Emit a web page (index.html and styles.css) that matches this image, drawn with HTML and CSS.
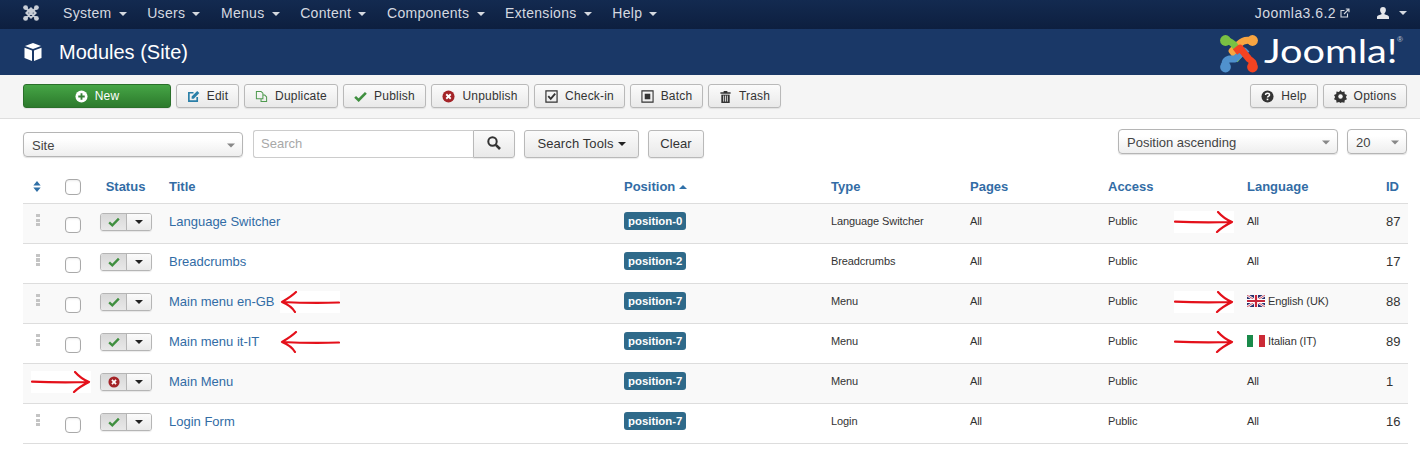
FILE: index.html
```html
<!DOCTYPE html>
<html lang="en">
<head>
<meta charset="utf-8">
<title>Modules (Site)</title>
<link rel="stylesheet" href="styles.css">
</head>
<body>
<svg class="defs" width="0" height="0">
  <defs>
    <symbol id="caret" viewBox="0 0 8 4"><path d="M0 0h8L4 4z" fill="currentColor"/></symbol>
    <symbol id="check" viewBox="0 0 14 12"><path d="M1.200 6.400 5 10 12.800 2" fill="none" stroke="currentColor" stroke-width="2.800"/></symbol>
    <symbol id="xcircle" viewBox="0 0 14 14"><circle cx="7" cy="7" r="6.500" fill="currentColor"/><path d="M4.600 4.600l4.800 4.800M9.400 4.600 4.600 9.400" stroke="#fff" stroke-width="2"/></symbol>
    <symbol id="mark" viewBox="0 0 20 20"><g fill="none" stroke="currentColor" stroke-width="2.800"><path d="M4 4l12 12M16 4 4 16M10 4.500 4.500 10 10 15.500 15.500 10z"/></g><g fill="currentColor"><circle cx="3.200" cy="3.200" r="3"/><circle cx="16.800" cy="3.200" r="3"/><circle cx="3.200" cy="16.800" r="3"/><circle cx="16.800" cy="16.800" r="3"/></g></symbol>
    <symbol id="arrow-right" viewBox="0 0 60 22"><path d="M1 10.600c18 .8 38 .9 57 .4M44 1c4 4.500 9 8 14 10-5 2.500-11 6-15 10" fill="none" stroke="#e4101a" stroke-width="2.200" stroke-linecap="round" stroke-linejoin="round"/></symbol>
    <symbol id="arrow-left" viewBox="0 0 60 22"><path d="M59 11.500c-18 .6-38 .4-57-.5M16 1C12 5 7 8 2 11c5 2 10 5 13 10" fill="none" stroke="#e4101a" stroke-width="2.200" stroke-linecap="round" stroke-linejoin="round"/></symbol>
  </defs>
</svg>

<nav class="topbar">
  <svg class="nav-logo"><use href="#mark"/></svg>
  <ul class="nav-menu">
    <li>System <svg class="caret"><use href="#caret"/></svg></li>
    <li>Users <svg class="caret"><use href="#caret"/></svg></li>
    <li>Menus <svg class="caret"><use href="#caret"/></svg></li>
    <li>Content <svg class="caret"><use href="#caret"/></svg></li>
    <li>Components <svg class="caret"><use href="#caret"/></svg></li>
    <li>Extensions <svg class="caret"><use href="#caret"/></svg></li>
    <li>Help <svg class="caret"><use href="#caret"/></svg></li>
  </ul>
  <div class="nav-right">
    <span class="site-link">Joomla3.6.2
      <svg class="ext" viewBox="0 0 10 10"><path d="M7.500 5.500V9H1V2.500h3.500M4 6l5-5M5.800 1H9v3.200" fill="none" stroke="currentColor" stroke-width="1.100"/></svg>
    </span>
    <span class="user">
      <svg class="user-ico" viewBox="0 0 12 12"><path d="M6 0c1.900 0 2.900 1.300 2.900 3.100 0 1.400-.7 2.600-1.400 3.200v.9c1.500.5 4.500 1 4.500 2.800V12H0v-2c0-1.800 3-2.300 4.500-2.800v-.9c-.7-.6-1.400-1.800-1.400-3.200C3.100 1.300 4.100 0 6 0z" fill="currentColor"/></svg>
      <svg class="caret"><use href="#caret"/></svg>
    </span>
  </div>
</nav>

<header class="subhead">
  <svg class="cube" viewBox="0 0 18 18"><path d="M9 0l8 3-8 3-8-3z" fill="#fff"/><path d="M.5 4.800l7.500 2.800V18L.500 15z" fill="#fff"/><path d="M17.500 4.800 10 7.600V18l7.500-3z" fill="#fff"/></svg>
  <h1 class="page-title">Modules (Site)</h1>
  <div class="brand">
    <svg class="brand-mark" viewBox="0 0 38 38">
      <g fill="none" stroke-width="6.800" stroke-linejoin="round">
        <path d="M32 6 C26 4 22 6 19 9 L12 16 L16 21" stroke="#f9a541"/>
        <path d="M5 5 C10 6 13 8 15 11 L21 18 L15 25" stroke="#7ac143"/>
        <path d="M5 32 C4 27 6 25 9 24 L15 24 L24 16 L27 19" stroke="#5091cd"/>
        <path d="M33 32 C35 28 32 26 29 24 L20 13 L15 17" stroke="#f44321"/>
      </g>
      <circle cx="5.500" cy="5.500" r="5.400" fill="#7ac143"/>
      <circle cx="32.500" cy="5.500" r="5.400" fill="#f9a541"/>
      <circle cx="32.500" cy="32" r="5.400" fill="#f44321"/>
      <circle cx="5.500" cy="32" r="5.400" fill="#5091cd"/>
    </svg>
    <span class="brand-text">Joomla!</span><span class="reg">®</span>
  </div>
</header>

<section class="toolbar">
  <button class="btn btn-new"><svg class="ico" viewBox="0 0 14 14"><circle cx="7" cy="7" r="6.500" fill="#fff"/><path d="M7 3.500v7M3.500 7h7" stroke="#378137" stroke-width="2"/></svg>New</button>
  <button class="btn w-edit"><svg class="ico blue" viewBox="0 0 14 14"><path d="M11 7.500V12H2V3h5" fill="none" stroke="currentColor" stroke-width="1.800"/><path d="M5 9.500V7l6-6 2.300 2.300-6 6z" fill="currentColor"/></svg>Edit</button>
  <button class="btn w-dup"><svg class="ico green-line" viewBox="0 0 14 14"><path d="M1.500 1.500h5l2 2v6h-7zM8.500 5.500h2l2 2v5h-6v-3" fill="none" stroke="currentColor" stroke-width="1.100"/></svg>Duplicate</button>
  <button class="btn w-pub"><svg class="ico green" viewBox="0 0 14 12"><use href="#check"/></svg>Publish</button>
  <button class="btn w-unpub"><svg class="ico red"><use href="#xcircle"/></svg>Unpublish</button>
  <button class="btn w-checkin"><svg class="ico" viewBox="0 0 14 14"><path d="M1 1h12v12H1z" fill="none" stroke="#333" stroke-width="1.300"/><path d="M3.500 6.500 6.200 9.500 11 3.800" fill="none" stroke="#333" stroke-width="2"/></svg>Check-in</button>
  <button class="btn w-batch"><svg class="ico" viewBox="0 0 14 14"><path d="M1 1h12v12H1z" fill="none" stroke="#333" stroke-width="1.200"/><path d="M4 4h6v6H4z" fill="#333"/></svg>Batch</button>
  <button class="btn w-trash"><svg class="ico" viewBox="0 0 14 14"><path d="M1.500 2.500h11v1.500h-11zM5 2.500V1h4v1.500" fill="#333"/><path d="M2.500 5h9v9h-9z" fill="#333"/><path d="M5 6v6.500M7 6v6.500M9 6v6.500" stroke="#f5f5f5" stroke-width=".9"/></svg>Trash</button>
  <div class="toolbar-right">
    <button class="btn w-help"><svg class="ico" viewBox="0 0 14 14"><circle cx="7" cy="7" r="6.500" fill="#333"/><path d="M4.800 5.400C5 3 9.200 3 9.200 5.300 9.200 6.700 7 6.600 7 8.200" fill="none" stroke="#fff" stroke-width="1.600"/><path d="M6.100 9.300h1.800v1.700H6.100z" fill="#fff"/></svg>Help</button>
    <button class="btn w-options"><svg class="ico" viewBox="0 0 14 14"><path d="M7 0l1.600 2.200 2.700-.6.300 2.700 2.400 1.200L12.800 7.500 14 10l-2.400 1-.4 2.600-2.700-.5L7 14l-1.600-1-2.600.6-.4-2.600L0 10l1.200-2.500L0 5.500l2.400-1.200.3-2.700 2.700.6z" fill="#333"/><circle cx="7" cy="7" r="2.400" fill="#f5f5f5"/></svg>Options</button>
  </div>
</section>

<section class="filters">
  <div class="select s-site">Site<svg class="sel-caret"><use href="#caret"/></svg></div>
  <div class="search-group">
    <div class="search-input">Search</div>
    <button class="btn search-btn"><svg class="search-ico" viewBox="0 0 14 14"><circle cx="5.500" cy="5.500" r="4.200" fill="none" stroke="#333" stroke-width="2"/><path d="M8.800 8.800 13 13" stroke="#333" stroke-width="2.600"/></svg></button>
  </div>
  <button class="btn tall w-tools">Search Tools <svg class="caret dark"><use href="#caret"/></svg></button>
  <button class="btn tall w-clear">Clear</button>
  <div class="filters-right">
    <div class="select s-order">Position ascending<svg class="sel-caret"><use href="#caret"/></svg></div>
    <div class="select s-limit">20<svg class="sel-caret"><use href="#caret"/></svg></div>
  </div>
</section>

<main class="table-wrap">
  <table class="modules">
    <colgroup>
      <col class="c-order"><col class="c-check"><col class="c-status"><col class="c-title"><col class="c-pos"><col class="c-type"><col class="c-pages"><col class="c-access"><col class="c-lang"><col class="c-id">
    </colgroup>
    <thead>
      <tr>
        <th class="center th-sort"><svg class="sort" viewBox="0 0 8 12"><path d="M4 0l4 5H0zM4 12 0 7h8z" fill="currentColor"/></svg></th>
        <th><span class="cb"></span></th>
        <th class="center th-status">Status</th>
        <th>Title</th>
        <th>Position <svg class="caret up"><use href="#caret"/></svg></th>
        <th>Type</th>
        <th>Pages</th>
        <th>Access</th>
        <th>Language</th>
        <th>ID</th>
      </tr>
    </thead>
    <tbody>
      <tr>
        <td><span class="drag"></span></td><td><span class="cb low"></span></td>
        <td><span class="status"><span class="st-l"><svg class="st-check"><use href="#check"/></svg></span><span class="st-r"><svg class="caret dark"><use href="#caret"/></svg></span></span></td>
        <td class="title">Language Switcher</td><td><span class="badge">position-0</span></td><td class="small">Language Switcher</td><td class="small">All</td><td class="small">Public</td><td class="small">All</td><td class="id">87</td>
      </tr>
      <tr>
        <td><span class="drag"></span></td><td><span class="cb low"></span></td>
        <td><span class="status"><span class="st-l"><svg class="st-check"><use href="#check"/></svg></span><span class="st-r"><svg class="caret dark"><use href="#caret"/></svg></span></span></td>
        <td class="title">Breadcrumbs</td><td><span class="badge">position-2</span></td><td class="small">Breadcrumbs</td><td class="small">All</td><td class="small">Public</td><td class="small">All</td><td class="id">17</td>
      </tr>
      <tr>
        <td><span class="drag"></span></td><td><span class="cb low"></span></td>
        <td><span class="status"><span class="st-l"><svg class="st-check"><use href="#check"/></svg></span><span class="st-r"><svg class="caret dark"><use href="#caret"/></svg></span></span></td>
        <td class="title">Main menu en-GB</td><td><span class="badge">position-7</span></td><td class="small">Menu</td><td class="small">All</td><td class="small">Public</td>
        <td class="small"><svg class="flag" viewBox="0 0 18 12"><path fill="#28306e" d="M0 0h18v12H0z"/><path d="M0 0l18 12M18 0 0 12" stroke="#fff" stroke-width="2.400"/><path d="M0 0l18 12M18 0 0 12" stroke="#c8283c" stroke-width=".8"/><path d="M9 0v12M0 6h18" stroke="#fff" stroke-width="4"/><path d="M9 0v12M0 6h18" stroke="#c8283c" stroke-width="2.200"/></svg>English (UK)</td><td class="id">88</td>
      </tr>
      <tr>
        <td><span class="drag"></span></td><td><span class="cb low"></span></td>
        <td><span class="status"><span class="st-l"><svg class="st-check"><use href="#check"/></svg></span><span class="st-r"><svg class="caret dark"><use href="#caret"/></svg></span></span></td>
        <td class="title">Main menu it-IT</td><td><span class="badge">position-7</span></td><td class="small">Menu</td><td class="small">All</td><td class="small">Public</td>
        <td class="small"><svg class="flag" viewBox="0 0 18 12"><path fill="#1a8a4a" d="M0 0h6v12H0z"/><path fill="#fff" d="M6 0h6v12H6z"/><path fill="#cc2a36" d="M12 0h6v12h-6z"/></svg>Italian (IT)</td><td class="id">89</td>
      </tr>
      <tr>
        <td></td><td></td>
        <td><span class="status"><span class="st-l"><svg class="st-x"><use href="#xcircle"/></svg></span><span class="st-r"><svg class="caret dark"><use href="#caret"/></svg></span></span></td>
        <td class="title">Main Menu</td><td><span class="badge">position-7</span></td><td class="small">Menu</td><td class="small">All</td><td class="small">Public</td><td class="small">All</td><td class="id">1</td>
      </tr>
      <tr>
        <td><span class="drag"></span></td><td><span class="cb low"></span></td>
        <td><span class="status"><span class="st-l"><svg class="st-check"><use href="#check"/></svg></span><span class="st-r"><svg class="caret dark"><use href="#caret"/></svg></span></span></td>
        <td class="title">Login Form</td><td><span class="badge">position-7</span></td><td class="small">Login</td><td class="small">All</td><td class="small">Public</td><td class="small">All</td><td class="id">16</td>
      </tr>
    </tbody>
  </table>
</main>

<svg class="note a1"><use href="#arrow-right"/></svg>
<svg class="note a2"><use href="#arrow-right"/></svg>
<svg class="note a3"><use href="#arrow-right"/></svg>
<svg class="note a4"><use href="#arrow-left"/></svg>
<svg class="note a5"><use href="#arrow-left"/></svg>
<svg class="note a6"><use href="#arrow-right"/></svg>
</body>
</html>
```
FILE: styles.css
```css
* { box-sizing: border-box; }
html, body { margin: 0; padding: 0; }
body {
  position: relative;
  width: 1420px;
  height: 460px;
  overflow: hidden;
  background: #fff;
  color: #333;
  font-family: "Liberation Sans", Arial, sans-serif;
  font-size: 13px;
  line-height: 18px;
}
.defs { position: absolute; }
.caret { display: inline-block; width: 8px; height: 4px; vertical-align: middle; margin-left: 3px; color: #d5d9e0; }
.caret.dark { color: #222; margin-left: 0; }
.caret.up { color: #3071a9; transform: rotate(180deg); margin-left: 0; position: relative; top: -1px; }

/* top bar */
.topbar {
  height: 29px;
  display: flex;
  align-items: center;
  padding: 0 13px 3px 23px;
  background: linear-gradient(#132a50, #0d1f3f);
  color: #d5d9e0;
  font-size: 14px;
  letter-spacing: .3px;
}
.nav-logo { width: 16px; height: 16px; color: #c9ced6; flex: none; }
.nav-menu { list-style: none; display: flex; margin: 0 0 0 24px; padding: 0; gap: 20.500px; }
.nav-menu li { white-space: nowrap; }
.nav-right { margin-left: auto; display: flex; align-items: center; gap: 27px; }
.site-link { display: inline-flex; align-items: center; gap: 4px; letter-spacing: .45px; }
.ext { width: 10px; height: 10px; }
.user { display: inline-flex; align-items: center; gap: 7px; color: #e4e6ea; }
.user-ico { width: 12px; height: 12px; }

/* title bar */
.subhead {
  height: 46px;
  display: flex;
  align-items: center;
  padding-left: 24px;
  background: #1a3867;
  color: #fff;
}
.cube { width: 18px; height: 18px; flex: none; }
.page-title { margin: 0 0 0 17px; font-size: 20px; font-weight: 400; line-height: 24px; }
.brand { margin-left: auto; width: 182px; margin-right: 18px; display: flex; align-items: center; height: 100%; }
.brand-mark { width: 38px; height: 38px; margin-top: 4px; flex: none; }
.brand-text {
  display: inline-block;
  width: 104px;
  margin-left: 6px;
  font-family: Lato, "Liberation Sans", sans-serif;
  font-weight: 400;
  font-size: 32px;
  line-height: 40px;
  white-space: nowrap;
  transform: scaleX(1.24);
  transform-origin: left center;
  position: relative;
  top: -1px;
}
.reg { font-size: 8px; line-height: 10px; margin: -24px 0 0 29px; color: #c5cbd6; }

/* toolbar */
.toolbar {
  height: 44px;
  display: flex;
  align-items: flex-start;
  gap: 5px;
  padding: 9px 13px 0 23px;
  background: #f5f5f5;
  border-bottom: 1px solid #dedede;
}
.toolbar-right { margin-left: auto; display: flex; gap: 5px; }
.btn {
  height: 24px;
  padding: 0;
  display: inline-flex;
  align-items: center;
  justify-content: center;
  gap: 7px;
  border: 1px solid #b9b9b9;
  border-radius: 3px;
  background: linear-gradient(#fbfbfb, #e9e9e9);
  box-shadow: 0 1px 1px rgba(0,0,0,.08);
  color: #333;
  font: 12px/18px "Liberation Sans", Arial, sans-serif;
  letter-spacing: .2px;
}
.ico { width: 13px; height: 13px; flex: none; }
.blue { color: #2a7fa8; }
.green-line { color: #4f9a4f; }
.green { color: #3f8f3f; }
.red { color: #a42428; }
.btn-new {
  width: 148px;
  color: #fff;
  border-color: #2a6f2a;
  background: linear-gradient(#46a546, #2c7a2c);
}
.w-edit { width: 63px; }
.w-dup { width: 94px; }
.w-pub { width: 83px; }
.w-unpub { width: 98px; }
.w-checkin { width: 91px; }
.w-batch { width: 73px; }
.w-trash { width: 73px; }
.w-help { width: 68px; }
.w-options { width: 84px; }

/* filters */
.filters {
  display: flex;
  align-items: flex-start;
  padding: 11px 13px 0 23px;
  height: 52px;
}
.select {
  position: relative;
  height: 25px;
  padding: 2px 0 0 8px;
  display: flex;
  align-items: center;
  border: 1px solid #b5b5b5;
  border-radius: 4px;
  background: linear-gradient(#fff 25%, #eee);
  box-shadow: 0 1px 1px rgba(0,0,0,.12);
  color: #444;
  font-size: 13px;
}
.sel-caret { position: absolute; right: 7px; top: 10px; width: 8px; height: 5px; color: #888; }
.s-site { width: 220px; margin-top: 2px; }
.s-order { width: 220px; }
.s-limit { width: 60px; margin-left: 9px; }
.search-group { display: flex; margin-left: 10px; }
.search-input {
  width: 220px;
  height: 28px;
  padding-left: 7px;
  display: flex;
  align-items: center;
  border: 1px solid #ccc;
  border-right: 0;
  border-radius: 3px 0 0 3px;
  color: #a8a8a8;
  background: #fff;
}
.search-btn { width: 42px; height: 28px; border-radius: 0 3px 3px 0; }
.search-ico { width: 14px; height: 14px; margin: -3px 0 0 -1px; }
.tall { height: 28px; font-size: 13px; gap: 4px; letter-spacing: .1px; }
.w-tools { width: 115px; margin-left: 9px; }
.w-clear { width: 56px; margin-left: 9px; }
.filters-right { margin-left: auto; display: flex; margin-top: -1px; }

/* table */
.table-wrap { padding: 0 12px 0 23px; }
.modules { width: 1385px; table-layout: fixed; border-collapse: collapse; }
.c-order { width: 34px; }
.c-check { width: 35px; }
.c-status { width: 69px; }
.c-title { width: 455px; }
.c-pos { width: 207px; }
.c-type { width: 139px; }
.c-pages { width: 138px; }
.c-access { width: 139px; }
.c-lang { width: 139px; }
.c-id { width: 30px; }
.modules th {
  height: 32px;
  padding: 7px 8px 6px;
  text-align: left;
  color: #326ca5;
  font-weight: 700;
  font-size: 13px;
  line-height: 18px;
  vertical-align: top;
  white-space: nowrap;
}
.modules th.center { text-align: center; padding-left: 0; padding-right: 0; }
.modules th.th-sort { padding-right: 6px; }
.modules th.th-status { padding-right: 2px; }
.sort { width: 8px; height: 11px; margin-top: 3px; display: inline-block; vertical-align: top; color: #2f6fa6; }
.modules td {
  height: 40px;
  padding: 8px;
  border-top: 1px solid #ddd;
  vertical-align: top;
  white-space: nowrap;
}
.modules tbody tr:nth-child(odd) td { background: #f9f9f9; }
.modules tbody tr:last-child td { border-bottom: 1px solid #ddd; }
.modules td.title { color: #326ca5; padding-top: 9px; }
.small { font-size: 11px; letter-spacing: -.1px; }
.modules td.id { padding: 9px 0 0 8px; }
.badge {
  display: inline-block;
  height: 18px;
  padding: 0 4px;
  border-radius: 3px;
  background: #2f6a8a;
  color: #fff;
  font-size: 11.400px;
  font-weight: 700;
  line-height: 18px;
}
.cb {
  display: block;
  width: 16px;
  height: 16px;
  border: 1px solid #a9a9a9;
  border-radius: 4px;
  background: #fff;
  box-shadow: inset 0 1px 2px rgba(0,0,0,.08);
}
.cb.low { margin-top: 5px; }
.modules th .cb { margin-top: 1px; }
.drag {
  display: block;
  width: 4px;
  height: 12px;
  margin: 2px 0 0 5px;
  background: repeating-linear-gradient(#c4c4c4 0 3px, transparent 3px 4.500px);
}
.status {
  display: flex;
  width: 52px;
  height: 18px;
  margin-top: 1px;
  border: 1px solid #b5b5b5;
  border-radius: 3px;
  overflow: hidden;
  box-shadow: 0 1px 1px rgba(0,0,0,.08);
}
.st-l {
  width: 26px;
  display: flex;
  align-items: center;
  justify-content: center;
  background: linear-gradient(#d8d8d8, #e8e8e8);
  border-right: 1px solid #b5b5b5;
}
.st-r {
  flex: 1;
  display: flex;
  align-items: center;
  justify-content: center;
  background: linear-gradient(#fbfbfb, #e9e9e9);
}
.st-check { width: 12px; height: 10px; color: #3f8f3f; }
.st-x { width: 12px; height: 12px; color: #a42428; }
.flag { width: 18px; height: 12px; margin-right: 3px; vertical-align: -2px; }

/* hand-drawn annotation arrows over the table */
.note { position: absolute; width: 60px; height: 22px; background: #fff; }
.a1 { left: 1174px; top: 211px; }
.a2 { left: 1174px; top: 291px; }
.a3 { left: 1174px; top: 331px; }
.a4 { left: 280px; top: 291px; }
.a5 { left: 280px; top: 331px; background: transparent; }
.a6 { left: 31px; top: 371px; }
```
